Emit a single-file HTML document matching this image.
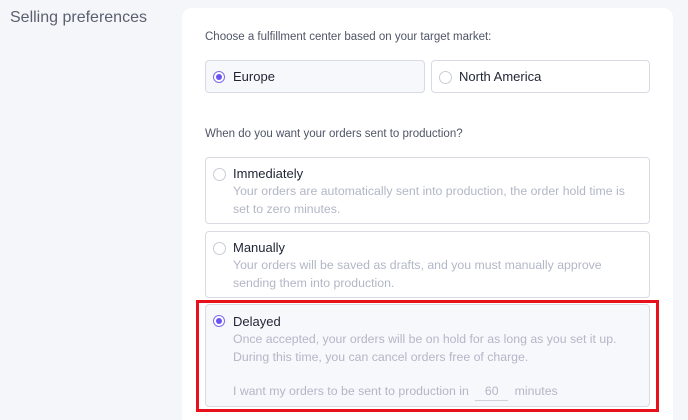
<!DOCTYPE html>
<html style="overflow:hidden;height:420px"><head><style>
body{margin:0;width:688px;height:420px;background:#f5f6fa;font-family:"Liberation Sans",sans-serif;position:relative;overflow:hidden}
.a{position:absolute}
.t{color:#5b6070;font-size:16px;left:10px;top:9px}
.card{left:182px;top:8px;width:491px;height:430px;background:#fff;border-radius:10px}
.lbl{font-size:11.5px;color:#4f5566}
.box{position:absolute;border:1px solid #d9dbe4;border-radius:4px;background:#fff;box-sizing:border-box}
.sel{background:#f7f8fc}
.r{position:absolute;width:11px;height:11px;border:1px solid #c9ccd6;border-radius:50%;background:#fff}
.r.on{border:1.5px solid #7b6cf0;width:10px;height:10px}
.r.on:after{content:"";position:absolute;left:2px;top:2px;width:6px;height:6px;border-radius:50%;background:#6a52f5}
.h{position:absolute;font-size:13px;color:#1f2433}
.d{position:absolute;font-size:12.3px;color:#b3b6c6;line-height:18px}
</style></head><body>
<div class="a t">Selling preferences</div>
<div class="a card"></div>
<div class="a lbl" style="left:205px;top:31px">Choose a fulfillment center based on your target market:</div>
<div class="box sel" style="left:205px;top:60px;width:220px;height:33px"><div class="r on" style="left:7px;top:10px"></div><div class="h" style="left:27px;top:8px">Europe</div></div>
<div class="box" style="left:431px;top:60px;width:219px;height:33px"><div class="r" style="left:7px;top:10px"></div><div class="h" style="left:27px;top:8px">North America</div></div>
<div class="a lbl" style="left:205px;top:128px">When do you want your orders sent to production?</div>
<div class="box" style="left:205px;top:157px;width:445px;height:67px"><div class="r" style="left:7px;top:10px"></div><div class="h" style="left:27px;top:8px">Immediately</div><div class="d" style="left:27px;top:24px">Your orders are automatically sent into production, the order hold time is<br>set to zero minutes.</div></div>
<div class="box" style="left:205px;top:231px;width:445px;height:67px"><div class="r" style="left:7px;top:10px"></div><div class="h" style="left:27px;top:8px">Manually</div><div class="d" style="left:27px;top:24px">Your orders will be saved as drafts, and you must manually approve<br>sending them into production.</div></div>
<div class="box sel" style="left:205px;top:304px;width:445px;height:103px"><div class="r on" style="left:7px;top:10px"></div><div class="h" style="left:27px;top:9px">Delayed</div><div class="d" style="left:27px;top:25px">Once accepted, your orders will be on hold for as long as you set it up.<br>During this time, you can cancel orders free of charge.</div><div class="d" style="left:27px;top:77px">I want my orders to be sent to production in <span style="display:inline-block;width:33px;border-bottom:1px solid #cfd2dc;text-align:center;margin:0 3px">60</span> minutes</div></div>
<div class="a" style="left:196px;top:300px;width:457px;height:106px;border:3px solid #e8101a"></div>
</body></html>
